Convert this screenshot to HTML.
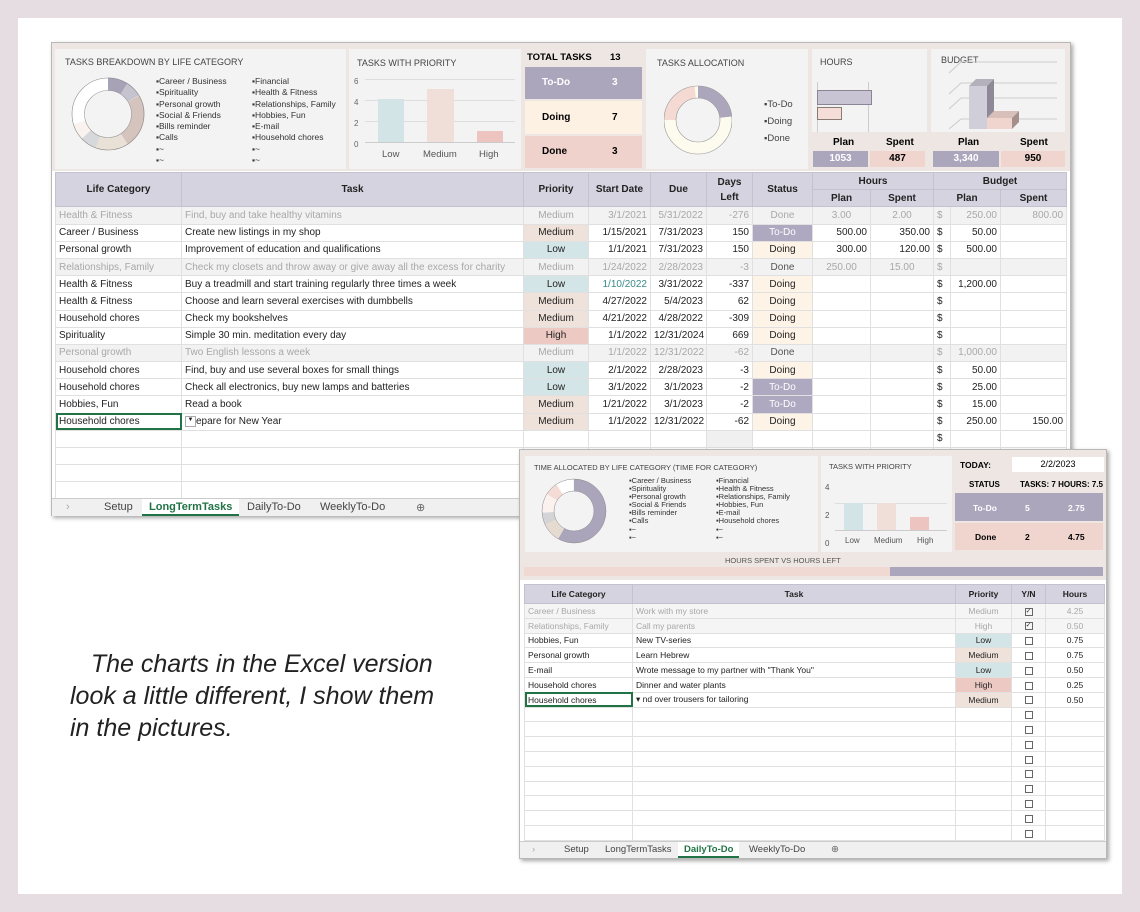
<!DOCTYPE html><html><head><meta charset="utf-8"><style>
*{box-sizing:border-box;margin:0;padding:0}
body{width:1140px;height:912px;overflow:hidden;background:#e6dde2;font-family:"Liberation Sans",sans-serif;position:relative}
.abs{position:absolute}
#paper{left:18px;top:18px;width:1104px;height:876px;background:#fff}
.win{background:#fff;border:1px solid #b8b8b8;box-shadow:2px 2px 4px rgba(0,0,0,.35)}
.panel{background:#f3f3f3;position:absolute}
.t{position:absolute;white-space:nowrap}
table{border-collapse:collapse;table-layout:fixed;position:absolute}
td{border:1px solid #e0e0e0;white-space:nowrap;overflow:hidden;padding:0 3px}
.m td{height:17.2px;font-size:10px;color:#222}
.m tr.g td{color:#a8a8a8;background:#f2f2f2}
.c{text-align:center}.r{text-align:right}
.med{background:#efe2da}.low{background:#d4e5e7}.high{background:#edc9c3}
.done{background:#efd5ce}.todo{background:#aea8c0;color:#fff!important}.doing{background:#fdf3e7}
.neg{color:#9c3a3a}
.hd td{background:#d5d3df;font-weight:bold;font-size:10px;text-align:center;border-color:#c4c2ce;color:#222}
.s td{height:14.8px;font-size:8.5px;color:#222}
.s tr.g td{color:#a8a8a8;background:#f5f5f5}
.cb{display:inline-block;width:8px;height:8px;border:1px solid #666;vertical-align:middle}
.tabs{position:absolute;background:#f0f0f0;border-top:1px solid #ccc;font-size:11px;color:#444}
.tabs span{position:absolute;top:2px}
.leg{font-size:8.5px;line-height:11.3px;color:#333}
</style></head><body>
<div id="paper" class="abs"></div>

<div class="abs win" style="left:51px;top:42px;width:1020px;height:474px">
 <div class="abs" style="left:0;top:0;width:1018px;height:128px;background:#ede6e2"></div>
 <div class="panel" style="left:3px;top:6px;width:291px;height:120px">
  <div class="t" style="left:10px;top:8px;font-size:9px;color:#444">TASKS BREAKDOWN BY LIFE CATEGORY</div>
  <svg class="abs" style="left:16px;top:28px" width="74" height="74" viewBox="0 0 74 74">
   <g fill="none" stroke-width="13">
   <circle cx="37" cy="37" r="30" stroke="#fff" stroke-dasharray="189 0"/>
   <circle cx="37" cy="37" r="30" stroke="#a8a2b7" stroke-dasharray="17 172" transform="rotate(-90 37 37)"/>
   <circle cx="37" cy="37" r="30" stroke="#c5c3cd" stroke-dasharray="14 175" transform="rotate(-58 37 37)"/>
   <circle cx="37" cy="37" r="30" stroke="#d4c4bd" stroke-dasharray="46 143" transform="rotate(-31 37 37)"/>
   <circle cx="37" cy="37" r="30" stroke="#e9e1d6" stroke-dasharray="28 161" transform="rotate(57 37 37)"/>
   <circle cx="37" cy="37" r="30" stroke="#d7d8dc" stroke-dasharray="14 175" transform="rotate(110 37 37)"/>
   <circle cx="37" cy="37" r="30" stroke="#faf2ee" stroke-dasharray="14 175" transform="rotate(137 37 37)"/>
   </g><circle cx="37" cy="37" r="36" fill="none" stroke="#888" stroke-width=".6"/><circle cx="37" cy="37" r="23.5" fill="none" stroke="#999" stroke-width=".6"/>
  </svg>
  <div class="t leg" style="left:101px;top:27px">▪Career / Business<br>▪Spirituality<br>▪Personal growth<br>▪Social &amp; Friends<br>▪Bills reminder<br>▪Calls<br>▪~<br>▪~</div>
  <div class="t leg" style="left:197px;top:27px">▪Financial<br>▪Health &amp; Fitness<br>▪Relationships, Family<br>▪Hobbies, Fun<br>▪E-mail<br>▪Household chores<br>▪~<br>▪~</div>
 </div>
 <div class="panel" style="left:297px;top:6px;width:172px;height:120px">
  <div class="t" style="left:8px;top:9px;font-size:9px;color:#444">TASKS WITH PRIORITY</div>
  <div class="t" style="left:5px;top:22px;font-size:8px;color:#666;line-height:21px">6<br>4<br>2<br>0</div>
  <div class="abs" style="left:16px;top:30px;width:150px;border-top:1px solid #ddd"></div>
  <div class="abs" style="left:16px;top:51px;width:150px;border-top:1px solid #ddd"></div>
  <div class="abs" style="left:16px;top:72px;width:150px;border-top:1px solid #ddd"></div>
  <div class="abs" style="left:16px;top:93px;width:150px;border-top:1px solid #ccc"></div>
  <div class="abs" style="left:29px;top:50px;width:26px;height:43px;background:#d3e4e6"></div>
  <div class="abs" style="left:78px;top:40px;width:27px;height:53px;background:#efdfd8"></div>
  <div class="abs" style="left:128px;top:82px;width:26px;height:11px;background:#edc4bf"></div>
  <div class="t" style="left:33px;top:100px;font-size:9.5px;color:#555">Low</div>
  <div class="t" style="left:74px;top:100px;font-size:9.5px;color:#555">Medium</div>
  <div class="t" style="left:130px;top:100px;font-size:9.5px;color:#555">High</div>
 </div>
 <div class="t" style="left:475px;top:9px;font-size:9.5px;font-weight:bold">TOTAL TASKS</div>
 <div class="t" style="left:558px;top:9px;font-size:9.5px;font-weight:bold">13</div>
 <div class="abs" style="left:473px;top:24px;width:117px;height:32px;background:#aca6bd;color:#fff;font-size:10px;font-weight:bold"><span class="t" style="left:17px;top:10px">To-Do</span><span class="t" style="left:87px;top:10px">3</span></div>
 <div class="abs" style="left:473px;top:58px;width:117px;height:33px;background:#fdf1e4;font-size:10px;font-weight:bold"><span class="t" style="left:17px;top:11px">Doing</span><span class="t" style="left:87px;top:11px">7</span></div>
 <div class="abs" style="left:473px;top:93px;width:117px;height:32px;background:#efd2cb;font-size:10px;font-weight:bold"><span class="t" style="left:17px;top:10px">Done</span><span class="t" style="left:87px;top:10px">3</span></div>
 <div class="panel" style="left:594px;top:6px;width:162px;height:120px">
  <div class="t" style="left:11px;top:9px;font-size:9px;color:#444">TASKS ALLOCATION</div>
  <svg class="abs" style="left:18px;top:32px" width="68" height="78" viewBox="0 0 68 78"><g fill="none" stroke-width="12" transform="translate(34 39)">
   <circle r="28" stroke="#fdfaee"/><circle r="28" stroke="#aca6bd" stroke-dasharray="41 135" transform="rotate(-90)"/><circle r="28" stroke="#f5d9d3" stroke-dasharray="41 135" transform="rotate(180)"/></g>
   <circle cx="34" cy="39" r="34" fill="none" stroke="#999" stroke-width=".6"/><circle cx="34" cy="39" r="22" fill="none" stroke="#999" stroke-width=".6"/></svg>
  <div class="t" style="left:118px;top:47px;font-size:9.5px;line-height:17px;color:#444">▪To-Do<br>▪Doing<br>▪Done</div>
 </div>
 <div class="panel" style="left:760px;top:6px;width:115px;height:83px">
  <div class="t" style="left:8px;top:8px;font-size:9px;color:#444">HOURS</div>
  <div class="abs" style="left:5px;top:33px;height:50px;border-left:1px solid #ccc"></div>
  <div class="abs" style="left:56px;top:33px;height:50px;border-left:1px solid #ccc"></div>
  <div class="abs" style="left:5px;top:41px;width:55px;height:15px;background:#c9c4d3;border:1px solid #8a8494"></div>
  <div class="abs" style="left:5px;top:58px;width:25px;height:13px;background:#f6ded8;border:1px solid #8a7a76"></div>
 </div>
 <div class="abs" style="left:761px;top:92px;font-size:10px;font-weight:bold"><span class="t" style="left:20px;top:2px">Plan</span><span class="t" style="left:73px;top:2px">Spent</span></div>
 <div class="abs" style="left:761px;top:108px;width:55px;height:16px;background:#aca6bd;color:#fff;font-size:10px;font-weight:bold;text-align:center;line-height:16px">1053</div>
 <div class="abs" style="left:818px;top:108px;width:55px;height:16px;background:#efd5ce;font-size:10px;font-weight:bold;text-align:center;line-height:16px">487</div>
 <div class="panel" style="left:879px;top:6px;width:134px;height:83px">
  <div class="t" style="left:10px;top:6px;font-size:9px;color:#444">BUDGET</div>
  <svg class="abs" style="left:8px;top:0" width="124" height="80"><g stroke="#ccc" fill="none"><path d="M10 24 L22 13 H118 M10 60 L22 49 H118 M10 45 L22 34 H118 M10 80 L22 70 H118"/></g>
   <path d="M30 37 H48 V80 H30Z" fill="#d0ced8"/><path d="M30 37 L37 30 H55 L48 37Z" fill="#b4b0bc"/><path d="M48 37 L55 30 V73 L48 80Z" fill="#8e8997"/>
   <path d="M48 69 H73 V80 H48Z" fill="#efd5ce"/><path d="M48 69 L55 62 H80 L73 69Z" fill="#d9bfb9"/><path d="M73 69 L80 62 V73 L73 80Z" fill="#a48f8a"/></svg>
 </div>
 <div class="abs" style="left:880px;top:92px;font-size:10px;font-weight:bold"><span class="t" style="left:26px;top:2px">Plan</span><span class="t" style="left:88px;top:2px">Spent</span></div>
 <div class="abs" style="left:881px;top:108px;width:66px;height:16px;background:#aca6bd;color:#fff;font-size:10px;font-weight:bold;text-align:center;line-height:16px">3,340</div>
 <div class="abs" style="left:949px;top:108px;width:64px;height:16px;background:#efd5ce;font-size:10px;font-weight:bold;text-align:center;line-height:16px">950</div>

 <table class="m" style="left:3px;top:129px;width:1011px">
  <colgroup><col style="width:126px"><col style="width:342px"><col style="width:65px"><col style="width:62px"><col style="width:56px"><col style="width:46px"><col style="width:60px"><col style="width:58px"><col style="width:63px"><col style="width:17px"><col style="width:50px"><col style="width:66px"></colgroup>
  <tr class="hd"><td rowspan="2" style="height:33px">Life Category</td><td rowspan="2">Task</td><td rowspan="2">Priority</td><td rowspan="2">Start Date</td><td rowspan="2">Due</td><td rowspan="2" style="line-height:15px;white-space:normal">Days Left</td><td rowspan="2">Status</td><td colspan="2" style="height:16px">Hours</td><td colspan="3">Budget</td></tr>
  <tr class="hd"><td style="height:17px">Plan</td><td>Spent</td><td colspan="2">Plan</td><td>Spent</td></tr>
  <tr class="g"><td>Health &amp; Fitness</td><td>Find, buy and take healthy vitamins</td><td class="c">Medium</td><td class="r">3/1/2021</td><td class="r">5/31/2022</td><td class="r">-276</td><td class="c done">Done</td><td class="c">3.00</td><td class="c">2.00</td><td>$</td><td class="r">250.00</td><td class="r">800.00</td></tr>
  <tr><td>Career / Business</td><td>Create new listings in my shop</td><td class="c med">Medium</td><td class="r">1/15/2021</td><td class="r">7/31/2023</td><td class="r">150</td><td class="c todo">To-Do</td><td class="r">500.00</td><td class="r">350.00</td><td>$</td><td class="r">50.00</td><td></td></tr>
  <tr><td>Personal growth</td><td>Improvement of education and qualifications</td><td class="c low">Low</td><td class="r">1/1/2021</td><td class="r">7/31/2023</td><td class="r">150</td><td class="c doing">Doing</td><td class="r">300.00</td><td class="r">120.00</td><td>$</td><td class="r">500.00</td><td></td></tr>
  <tr class="g"><td>Relationships, Family</td><td>Check my closets and throw away or give away all the excess for charity</td><td class="c">Medium</td><td class="r">1/24/2022</td><td class="r">2/28/2023</td><td class="r">-3</td><td class="c done" style="color:#555">Done</td><td class="c">250.00</td><td class="c">15.00</td><td>$</td><td></td><td></td></tr>
  <tr><td>Health &amp; Fitness</td><td>Buy a treadmill and start training regularly three times a week</td><td class="c low">Low</td><td class="r" style="color:#3a8a8a">1/10/2022</td><td class="r">3/31/2022</td><td class="r neg">-337</td><td class="c doing">Doing</td><td></td><td></td><td>$</td><td class="r">1,200.00</td><td></td></tr>
  <tr><td>Health &amp; Fitness</td><td>Choose and learn several exercises with dumbbells</td><td class="c med">Medium</td><td class="r">4/27/2022</td><td class="r">5/4/2023</td><td class="r">62</td><td class="c doing">Doing</td><td></td><td></td><td>$</td><td></td><td></td></tr>
  <tr><td>Household chores</td><td>Check my bookshelves</td><td class="c med">Medium</td><td class="r">4/21/2022</td><td class="r">4/28/2022</td><td class="r neg">-309</td><td class="c doing">Doing</td><td></td><td></td><td>$</td><td></td><td></td></tr>
  <tr><td>Spirituality</td><td>Simple 30 min. meditation every day</td><td class="c high">High</td><td class="r">1/1/2022</td><td class="r">12/31/2024</td><td class="r">669</td><td class="c doing">Doing</td><td></td><td></td><td>$</td><td></td><td></td></tr>
  <tr class="g"><td>Personal growth</td><td>Two English lessons a week</td><td class="c">Medium</td><td class="r">1/1/2022</td><td class="r">12/31/2022</td><td class="r">-62</td><td class="c done" style="color:#555">Done</td><td></td><td></td><td>$</td><td class="r">1,000.00</td><td></td></tr>
  <tr><td>Household chores</td><td>Find, buy and use several boxes for small things</td><td class="c low">Low</td><td class="r">2/1/2022</td><td class="r">2/28/2023</td><td class="r neg">-3</td><td class="c doing">Doing</td><td></td><td></td><td>$</td><td class="r">50.00</td><td></td></tr>
  <tr><td>Household chores</td><td>Check all electronics, buy new lamps and batteries</td><td class="c low">Low</td><td class="r">3/1/2022</td><td class="r">3/1/2023</td><td class="r neg">-2</td><td class="c todo">To-Do</td><td></td><td></td><td>$</td><td class="r">25.00</td><td></td></tr>
  <tr><td>Hobbies, Fun</td><td>Read a book</td><td class="c med">Medium</td><td class="r">1/21/2022</td><td class="r">3/1/2023</td><td class="r neg">-2</td><td class="c todo">To-Do</td><td></td><td></td><td>$</td><td class="r">15.00</td><td></td></tr>
  <tr><td style="outline:2px solid #217346;outline-offset:-2px">Household chores</td><td><span style="display:inline-block;border:1px solid #aaa;width:11px;height:11px;font-size:6px;text-align:center;vertical-align:middle">▼</span>epare for New Year</td><td class="c med">Medium</td><td class="r">1/1/2022</td><td class="r">12/31/2022</td><td class="r neg">-62</td><td class="c doing">Doing</td><td></td><td></td><td>$</td><td class="r">250.00</td><td class="r">150.00</td></tr>
  <tr><td></td><td></td><td></td><td></td><td></td><td style="background:#f0f0f0"></td><td></td><td></td><td></td><td>$</td><td></td><td></td></tr>
  <tr><td></td><td></td><td></td><td></td><td></td><td></td><td></td><td></td><td></td><td></td><td></td><td></td></tr>
  <tr><td></td><td></td><td></td><td></td><td></td><td></td><td></td><td></td><td></td><td></td><td></td><td></td></tr>
  <tr><td></td><td></td><td></td><td></td><td></td><td></td><td></td><td></td><td></td><td></td><td></td><td></td></tr>
 </table>
 <div class="tabs" style="left:0;top:455px;width:1018px;height:18px">
  <span style="left:14px;color:#aaa">›</span><span style="left:52px">Setup</span>
  <span style="left:90px;top:0;height:17px;background:#fff;padding:2px 7px;color:#217346;font-weight:bold;border-bottom:2px solid #217346">LongTermTasks</span>
  <span style="left:195px">DailyTo-Do</span><span style="left:268px">WeeklyTo-Do</span><span style="left:364px;color:#666">⊕</span>
 </div>
</div>

<div class="abs win" style="left:519px;top:449px;width:588px;height:410px">
 <div class="abs" style="left:0;top:0;width:586px;height:130px;background:#ede6e2"></div>
 <div class="panel" style="left:5px;top:6px;width:293px;height:96px">
  <div class="t" style="left:9px;top:7px;font-size:7.5px;color:#444">TIME ALLOCATED BY LIFE CATEGORY (TIME FOR CATEGORY)</div>
  <svg class="abs" style="left:16px;top:22px" width="66" height="66" viewBox="0 0 66 66"><g fill="none" stroke-width="12" transform="translate(33 33)">
   <circle r="26" stroke="#fff"/><circle r="26" stroke="#aba5bb" stroke-dasharray="95 68" transform="rotate(-90)"/>
   <circle r="26" stroke="#e5dbd0" stroke-dasharray="16 147" transform="rotate(120)"/><circle r="26" stroke="#d4d4d6" stroke-dasharray="10 153" transform="rotate(155)"/>
   <circle r="26" stroke="#fbf1ee" stroke-dasharray="15 148" transform="rotate(178)"/><circle r="26" stroke="#f4dbd6" stroke-dasharray="11 152" transform="rotate(212)"/></g>
   <circle cx="33" cy="33" r="32" fill="none" stroke="#888" stroke-width=".5"/><circle cx="33" cy="33" r="20" fill="none" stroke="#888" stroke-width=".5"/></svg>
  <div class="t" style="left:104px;top:21px;font-size:7.5px;line-height:8.1px;color:#333">▪Career / Business<br>▪Spirituality<br>▪Personal growth<br>▪Social &amp; Friends<br>▪Bills reminder<br>▪Calls<br>▪~<br>▪~</div>
  <div class="t" style="left:191px;top:21px;font-size:7.5px;line-height:8.1px;color:#333">▪Financial<br>▪Health &amp; Fitness<br>▪Relationships, Family<br>▪Hobbies, Fun<br>▪E-mail<br>▪Household chores<br>▪~<br>▪~</div>
 </div>
 <div class="panel" style="left:301px;top:6px;width:131px;height:96px">
  <div class="t" style="left:8px;top:6px;font-size:7.5px;color:#444">TASKS WITH PRIORITY</div>
  <div class="t" style="left:4px;top:18px;font-size:8px;color:#555;line-height:28px">4<br>2<br>0</div>
  <div class="abs" style="left:14px;top:47px;width:112px;border-top:1px solid #ddd"></div>
  <div class="abs" style="left:14px;top:74px;width:112px;border-top:1px solid #ccc"></div>
  <div class="abs" style="left:23px;top:47px;width:19px;height:27px;background:#d3e4e6"></div>
  <div class="abs" style="left:56px;top:47px;width:19px;height:27px;background:#efdfd8"></div>
  <div class="abs" style="left:89px;top:61px;width:19px;height:13px;background:#edc4bf"></div>
  <div class="t" style="left:24px;top:80px;font-size:8px;color:#555">Low</div>
  <div class="t" style="left:53px;top:80px;font-size:8px;color:#555">Medium</div>
  <div class="t" style="left:96px;top:80px;font-size:8px;color:#555">High</div>
 </div>
 <div class="t" style="left:440px;top:10px;font-size:8.5px;font-weight:bold">TODAY:</div>
 <div class="abs" style="left:492px;top:7px;width:92px;height:15px;background:#fff;font-size:9px;text-align:center;line-height:15px">2/2/2023</div>
 <div class="abs" style="left:435px;top:26px;width:149px;height:14px;font-size:8px;font-weight:bold"><span class="t" style="left:14px;top:4px">STATUS</span><span class="t" style="left:65px;top:4px">TASKS: 7 HOURS: 7.5</span></div>
 <div class="abs" style="left:435px;top:43px;width:148px;height:28px;background:#aca6bd;color:#fff;font-size:8.5px;font-weight:bold"><span class="t" style="left:18px;top:10px">To-Do</span><span class="t" style="left:70px;top:10px">5</span><span class="t" style="left:113px;top:10px">2.75</span></div>
 <div class="abs" style="left:435px;top:73px;width:148px;height:27px;background:#efd5ce;font-size:8.5px;font-weight:bold"><span class="t" style="left:20px;top:9px">Done</span><span class="t" style="left:70px;top:9px">2</span><span class="t" style="left:113px;top:9px">4.75</span></div>
 <div class="t" style="left:205px;top:106px;font-size:7.5px;color:#555">HOURS SPENT VS HOURS LEFT</div>
 <div class="abs" style="left:4px;top:117px;width:366px;height:9px;background:#f1d9d3"></div>
 <div class="abs" style="left:370px;top:117px;width:213px;height:9px;background:#aca6bd"></div>
 <table class="s" style="left:4px;top:134px;width:580px">
  <colgroup><col style="width:108px"><col style="width:323px"><col style="width:56px"><col style="width:34px"><col style="width:59px"></colgroup>
  <tr class="hd"><td style="height:19px;font-size:8.5px">Life Category</td><td style="font-size:8.5px">Task</td><td style="font-size:8.5px">Priority</td><td style="font-size:8.5px">Y/N</td><td style="font-size:8.5px">Hours</td></tr>
  <tr class="g"><td>Career / Business</td><td>Work with my store</td><td class="c">Medium</td><td class="c"><span class="cb" style="font-size:7px;line-height:6px;color:#333">✓</span></td><td class="c">4.25</td></tr>
  <tr class="g"><td>Relationships, Family</td><td>Call my parents</td><td class="c">High</td><td class="c"><span class="cb" style="font-size:7px;line-height:6px;color:#333">✓</span></td><td class="c">0.50</td></tr>
  <tr><td>Hobbies, Fun</td><td>New TV-series</td><td class="c low">Low</td><td class="c"><span class="cb"></span></td><td class="c">0.75</td></tr>
  <tr><td>Personal growth</td><td>Learn Hebrew</td><td class="c med">Medium</td><td class="c"><span class="cb"></span></td><td class="c">0.75</td></tr>
  <tr><td>E-mail</td><td>Wrote message to my partner with "Thank You"</td><td class="c low">Low</td><td class="c"><span class="cb"></span></td><td class="c">0.50</td></tr>
  <tr><td>Household chores</td><td>Dinner and water plants</td><td class="c high">High</td><td class="c"><span class="cb"></span></td><td class="c">0.25</td></tr>
  <tr><td style="outline:2px solid #217346;outline-offset:-2px">Household chores</td><td>▾ nd over trousers for tailoring</td><td class="c med">Medium</td><td class="c"><span class="cb"></span></td><td class="c">0.50</td></tr>
  <tr><td></td><td></td><td></td><td class="c"><span class="cb"></span></td><td></td></tr>
  <tr><td></td><td></td><td></td><td class="c"><span class="cb"></span></td><td></td></tr>
  <tr><td></td><td></td><td></td><td class="c"><span class="cb"></span></td><td></td></tr>
  <tr><td></td><td></td><td></td><td class="c"><span class="cb"></span></td><td></td></tr>
  <tr><td></td><td></td><td></td><td class="c"><span class="cb"></span></td><td></td></tr>
  <tr><td></td><td></td><td></td><td class="c"><span class="cb"></span></td><td></td></tr>
  <tr><td></td><td></td><td></td><td class="c"><span class="cb"></span></td><td></td></tr>
  <tr><td></td><td></td><td></td><td class="c"><span class="cb"></span></td><td></td></tr>
  <tr><td></td><td></td><td></td><td class="c"><span class="cb"></span></td><td></td></tr>
 </table>
 <div class="tabs" style="left:0;top:391px;width:586px;height:17px;font-size:9.5px">
  <span style="left:12px;color:#aaa">›</span><span style="left:44px">Setup</span><span style="left:85px">LongTermTasks</span>
  <span style="left:158px;top:0;height:16px;background:#fff;padding:2px 6px;color:#217346;font-weight:bold;border-bottom:2px solid #217346">DailyTo-Do</span>
  <span style="left:229px">WeeklyTo-Do</span><span style="left:311px;color:#666">⊕</span>
 </div>
</div>

<div class="t" style="left:70px;top:648px;font-size:25px;font-style:italic;color:#222;line-height:32px">&nbsp;&nbsp;&nbsp;The charts in the Excel version<br>look a little different, I show them<br>in the pictures.</div>
</body></html>
